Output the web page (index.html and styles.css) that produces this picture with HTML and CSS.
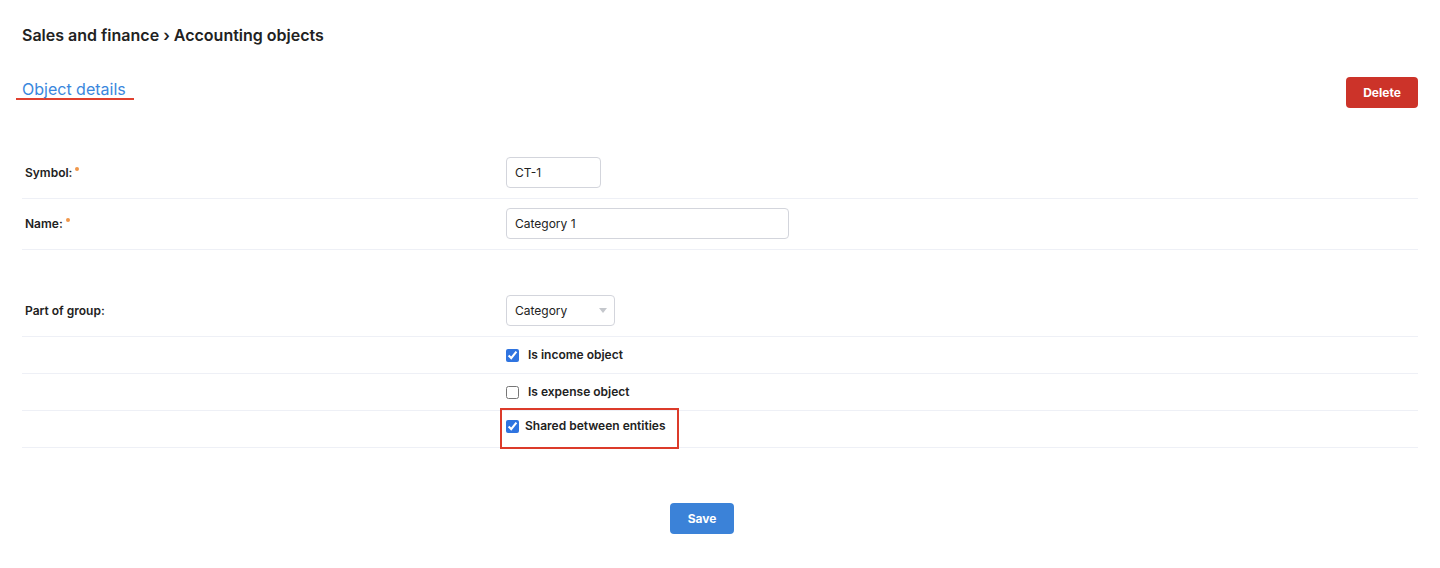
FILE: index.html
```html
<!DOCTYPE html>
<html lang="en">
<head>
  <meta charset="UTF-8">
  <title>Accounting objects</title>
  <link rel="stylesheet" href="styles.css">
</head>
<body>
  <div class="page">
    <h1 class="breadcrumb">Sales and finance › Accounting objects</h1>

    <div class="toolbar">
      <span class="tab">Object details</span>
      <button type="button" class="btn btn-delete">Delete</button>
    </div>

    <form class="details">
      <div class="row row-first">
        <label class="field-label">Symbol:<span class="req"></span></label>
        <div><input type="text" class="input input-symbol" value="CT-1"></div>
      </div>
      <div class="row">
        <label class="field-label">Name:<span class="req"></span></label>
        <div><input type="text" class="input input-name" value="Category 1"></div>
      </div>

      <div class="row row-spaced">
        <label class="field-label">Part of group:</label>
        <div>
          <div class="select">
            <span>Category</span>
            <svg width="8" height="5" viewBox="0 0 8 5"><path d="M0 0h8L4 5z" fill="#c4c7cc"/></svg>
          </div>
        </div>
      </div>
      <div class="row row-check">
        <span></span>
        <label class="check"><input type="checkbox" checked> Is income object</label>
      </div>
      <div class="row row-check">
        <span></span>
        <label class="check"><input type="checkbox"> Is expense object</label>
      </div>
      <div class="row row-check">
        <span></span>
        <label class="check check-marked"><input type="checkbox" checked> Shared between entities</label>
      </div>

      <div class="actions">
        <button type="button" class="btn btn-save">Save</button>
      </div>
    </form>
  </div>
</body>
</html>
```

FILE: styles.css
```css
body {
  margin: 0;
  font-family: Inter, "Noto Sans", Arial, sans-serif;
  color: #222;
  background: #ffffff;
}

.page {
  padding: 0 22px;
}

.breadcrumb {
  margin: 0;
  padding-top: 25px;
  font-size: 16px;
  line-height: 20px;
  font-weight: 600;
  color: #222;
}

.toolbar {
  display: flex;
  justify-content: space-between;
  align-items: flex-start;
  margin-top: 32px;
}

.tab {
  margin: 3px 0 0 -6px;
  padding: 0 8px 0 6px;
  font-size: 16px;
  line-height: 18px;
  color: #3a87dd;
  border-bottom: 2px solid #e0402f;
}

.btn {
  height: 31px;
  border: none;
  border-radius: 4px;
  color: #ffffff;
  font-family: inherit;
  font-size: 12px;
  font-weight: 700;
  cursor: pointer;
}

.btn-delete {
  width: 72px;
  background: #cc3329;
}

.btn-save {
  width: 64px;
  background: #3b82d8;
}

.details {
  margin-top: 39px;
}

.row {
  display: grid;
  grid-template-columns: 484px 1fr;
  align-items: center;
  padding: 9px 0 10px;
  border-bottom: 1px solid #eef0f6;
}

.row-first {
  padding-top: 10px;
}

.row-spaced {
  margin-top: 36px;
}

.row-check {
  min-height: 36px;
  padding: 0;
}

.field-label {
  padding-left: 3px;
  font-size: 12px;
  font-weight: 600;
}

.req {
  display: inline-block;
  width: 4px;
  height: 4px;
  margin-left: 3px;
  border-radius: 50%;
  background: #f0974a;
  vertical-align: 6px;
}

.input {
  box-sizing: border-box;
  height: 31px;
  padding: 0 8px;
  border: 1px solid #d3d5dc;
  border-radius: 4px;
  font-family: inherit;
  font-size: 12px;
  color: #222;
}

.input-symbol {
  width: 95px;
}

.input-name {
  width: 283px;
}

.select {
  box-sizing: border-box;
  display: inline-flex;
  align-items: center;
  justify-content: space-between;
  width: 109px;
  height: 31px;
  padding: 0 7px 0 8px;
  border: 1px solid #d3d5dc;
  border-radius: 4px;
  font-size: 12px;
}

.check {
  position: relative;
  display: inline-flex;
  align-items: center;
  gap: 9px;
  width: fit-content;
  font-size: 12px;
  line-height: 16px;
  font-weight: 600;
}

.check input {
  width: 13px;
  height: 13px;
  margin: 0;
  accent-color: #2f74e0;
}

.check-marked {
  gap: 6px;
  margin-bottom: 6px;
}

.check-marked::after {
  content: "";
  position: absolute;
  left: -6px;
  top: -10px;
  width: 179px;
  height: 41px;
  box-sizing: border-box;
  border: 2px solid #dc3b2a;
}

.actions {
  margin-top: 55px;
  padding-left: 648px;
}
```
